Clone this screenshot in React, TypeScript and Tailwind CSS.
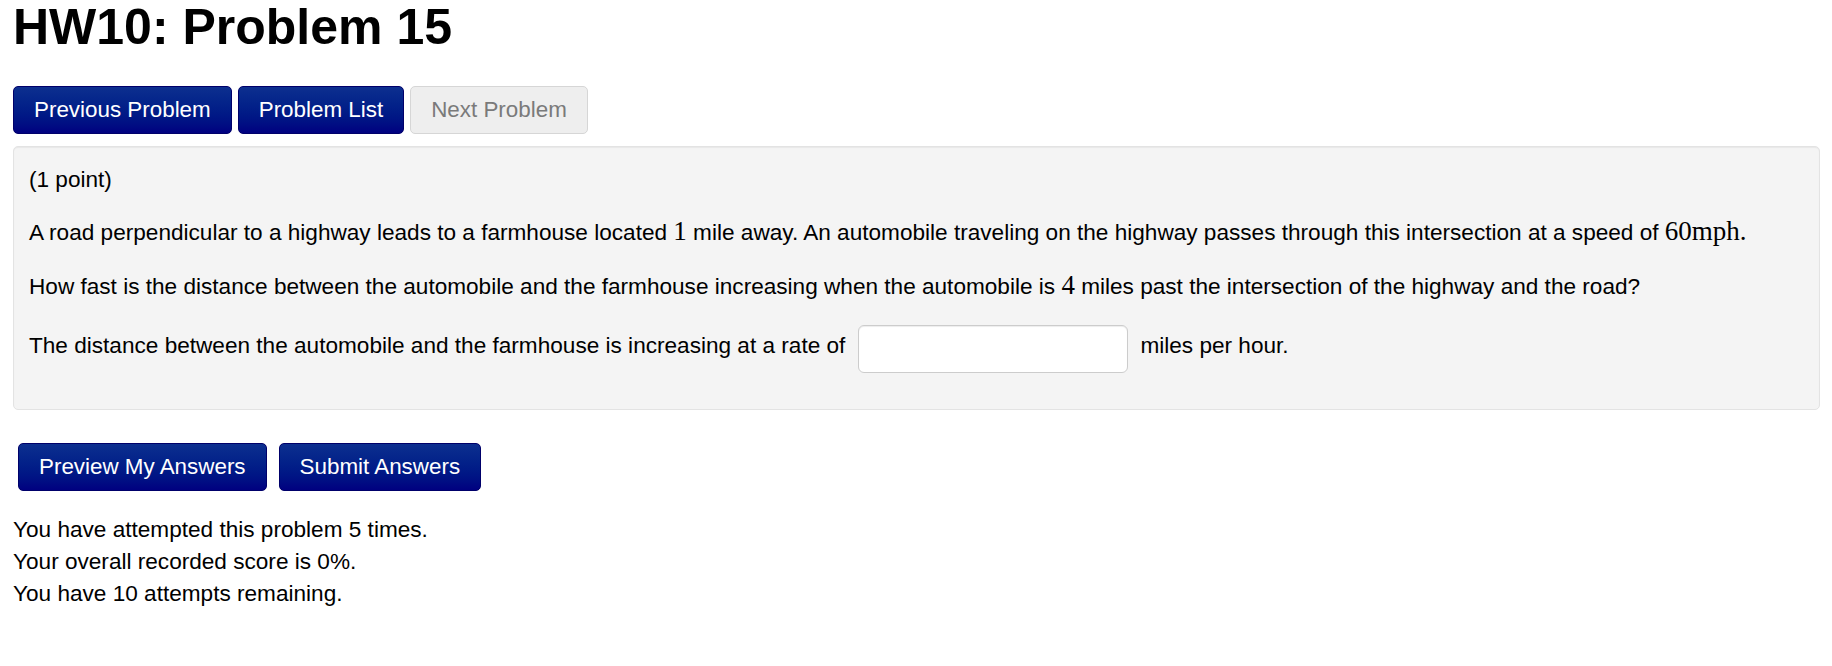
const sans = { fontFamily: '"Liberation Sans", Arial, Helvetica, sans-serif' };

function M({ children }: { children: React.ReactNode }) {
  return (
    <span className="font-['Liberation_Serif',serif] text-[27px] leading-none">
      {children}
    </span>
  );
}

function NavButton({ label, disabled }: { label: string; disabled?: boolean }) {
  if (disabled) {
    return (
      <span className="rounded-[5px] border border-[#d6d6d6] bg-[#eeeeee] px-[20px] py-[7px] text-[22.4px] leading-[32px] text-[#7a7a7a]">
        {label}
      </span>
    );
  }
  return (
    <button className="rounded-[5px] border border-[#00006a] bg-linear-to-b from-[#0d2f8f] to-[#000080] px-[20px] py-[7px] text-[22.4px] leading-[32px] text-white">
      {label}
    </button>
  );
}

export default function App() {
  return (
    <div className="min-h-screen bg-white px-[13px] text-black" style={sans}>
      <h1 className="pt-[2px] text-[50px] font-bold leading-[50px]">HW10: Problem 15</h1>

      <div className="mt-[34px] flex gap-[6px]">
        <NavButton label="Previous Problem" />
        <NavButton label="Problem List" />
        <NavButton label="Next Problem" disabled />
      </div>

      <div className="mt-[12px] w-[1807px] rounded-[5px] border border-[#e3e3e3] bg-[#f4f4f4] px-[15px] pt-[17px] pb-[36px] text-[22.6px] leading-[32px] shadow-[inset_0_1px_1px_rgba(0,0,0,0.05)]">
        <p className="mb-[21px]">(1 point)</p>
        <p className="mb-[22px]">
          A road perpendicular to a highway leads to a farmhouse located <M>1</M> mile away. An
          automobile traveling on the highway passes through this intersection at a speed of{" "}
          <M>60mph.</M>
        </p>
        <p className="mb-[22px]">
          How fast is the distance between the automobile and the farmhouse increasing when the
          automobile is <M>4</M> miles past the intersection of the highway and the road?
        </p>
        <div className="flex items-start">
          <span className="mt-[5px]">
            The distance between the automobile and the farmhouse is increasing at a rate of
          </span>
          <input
            type="text"
            className="ml-[13px] h-[48px] w-[270px] rounded-[6px] border border-[#cccccc] bg-white px-2 shadow-[inset_0_1px_1px_rgba(0,0,0,0.075)] outline-none"
          />
          <span className="mt-[5px] ml-[12px]">miles per hour.</span>
        </div>
      </div>

      <div className="mt-[33px] flex gap-[12px] pl-[5px]">
        <NavButton label="Preview My Answers" />
        <NavButton label="Submit Answers" />
      </div>

      <div className="mt-[23px] text-[22.6px] leading-[32px]">
        <div>You have attempted this problem 5 times.</div>
        <div>Your overall recorded score is 0%.</div>
        <div>You have 10 attempts remaining.</div>
      </div>
    </div>
  );
}
